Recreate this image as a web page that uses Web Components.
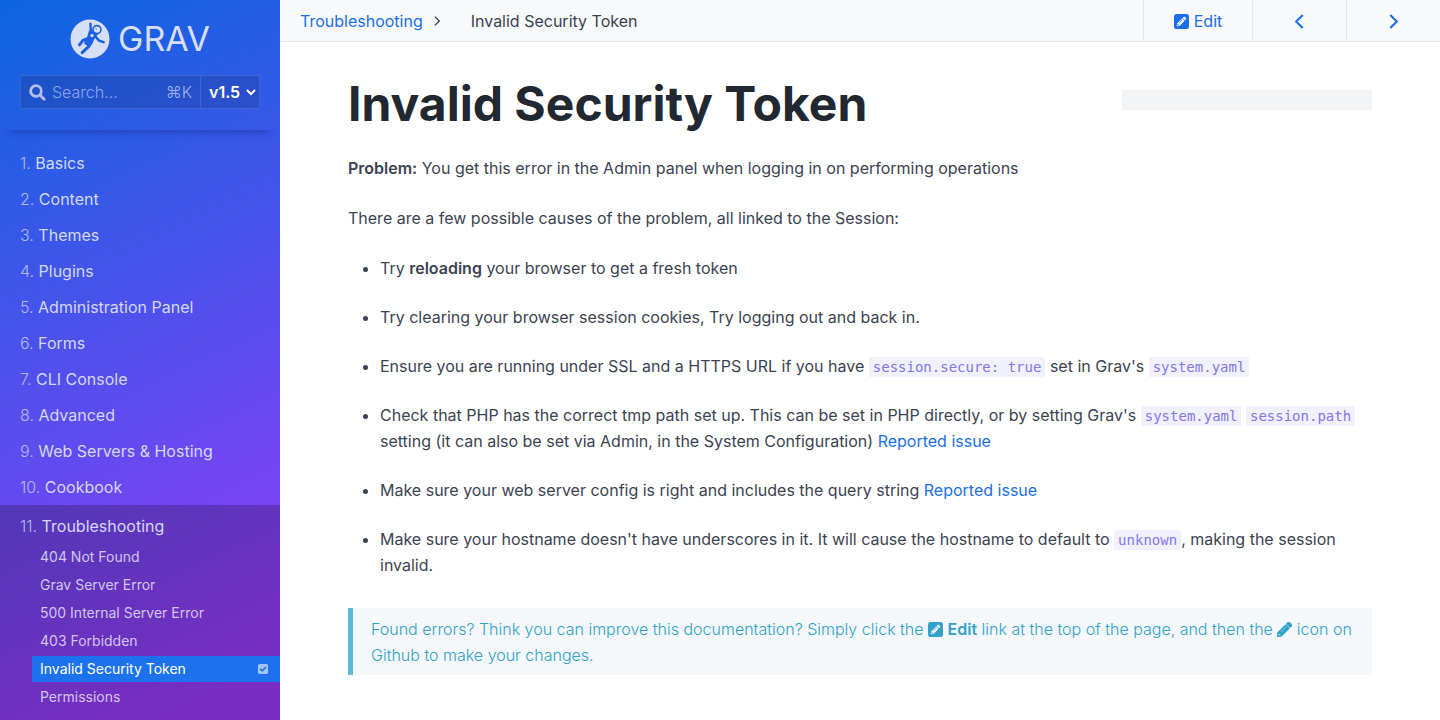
<!DOCTYPE html>
<html lang="en">
<head>
<meta charset="utf-8">
<meta name="viewport" content="width=device-width, initial-scale=1">
<title>Invalid Security Token | Grav Documentation</title>
<style>
:root {
	--link:#1a6fe8;
	--text:#3b4351;
	--heading:#222831;
	--line:#e4e7eb;
}
body {
	margin:0;
	font:400 16px/26px Inter, "Liberation Sans", sans-serif;
	color:var(--text);
	background:#fff;
}
a {
	color:var(--link);
	text-decoration:none;
}
p {
	margin:0 0 24px;
}
strong {
	font-weight:600;
}
ul {
	margin:0;
	padding:0 0 0 32px;
}
li {
	margin-bottom:23px;
}
</style>
</head>
<body>
<docs-layout>
	<docs-sidebar slot="sidebar">
		<nav-section number="1">Basics</nav-section>
		<nav-section number="2">Content</nav-section>
		<nav-section number="3">Themes</nav-section>
		<nav-section number="4">Plugins</nav-section>
		<nav-section number="5">Administration Panel</nav-section>
		<nav-section number="6">Forms</nav-section>
		<nav-section number="7">CLI Console</nav-section>
		<nav-section number="8">Advanced</nav-section>
		<nav-section number="9">Web Servers &amp; Hosting</nav-section>
		<nav-section number="10">Cookbook</nav-section>
		<nav-section number="11" open>Troubleshooting
			<nav-page slot="pages">404 Not Found</nav-page>
			<nav-page slot="pages">Grav Server Error</nav-page>
			<nav-page slot="pages">500 Internal Server Error</nav-page>
			<nav-page slot="pages">403 Forbidden</nav-page>
			<nav-page slot="pages" active>Invalid Security Token</nav-page>
			<nav-page slot="pages">Permissions</nav-page>
		</nav-section>
	</docs-sidebar>
	<docs-topbar slot="topbar">
		<a slot="parent" href="#troubleshooting">Troubleshooting</a>
		<span>Invalid Security Token</span>
	</docs-topbar>
	<docs-article>
		<span slot="title">Invalid Security Token</span>
		<p><strong>Problem:</strong> You get this error in the Admin panel when logging in on performing operations</p>
		<p>There are a few possible causes of the problem, all linked to the Session:</p>
		<ul>
			<li>Try <strong>reloading</strong> your browser to get a fresh token</li>
			<li>Try clearing your browser session cookies, Try logging out and back in.</li>
			<li>Ensure you are running under SSL and a HTTPS URL if you have <code-chip>session.secure: true</code-chip> set in Grav's <code-chip>system.yaml</code-chip></li>
			<li>Check that PHP has the correct tmp path set up. This can be set in PHP directly, or by setting Grav's <code-chip>system.yaml</code-chip> <code-chip>session.path</code-chip> setting (it can also be set via Admin, in the System Configuration) <a href="#issue-admin">Reported issue</a></li>
			<li>Make sure your web server config is right and includes the query string <a href="#issue-query">Reported issue</a></li>
			<li>Make sure your hostname doesn't have underscores in it. It will cause the hostname to default to <code-chip>unknown</code-chip>, making the session invalid.</li>
		</ul>
		<docs-note>Found errors? Think you can improve this documentation? Simply click the <svg-icon name="edit"></svg-icon> <strong>Edit</strong> link at the top of the page, and then the <svg-icon name="pencil"></svg-icon> icon on Github to make your changes.</docs-note>
	</docs-article>
</docs-layout>

<script>
const PENCIL = 'M497.9 142.1l-46.1 46.1c-4.7 4.7-12.3 4.7-17 0l-111-111c-4.7-4.7-4.7-12.3 0-17l46.1-46.1c18.7-18.7 49.1-18.7 67.9 0l60.1 60.1c18.8 18.7 18.8 49.1 0 67.9zM284.2 99.8L21.6 362.4.4 483.9c-2.9 16.4 11.4 30.6 27.8 27.8l121.5-21.3 262.6-262.6c4.7-4.7 4.7-12.3 0-17l-111-111c-4.8-4.7-12.4-4.7-17.1 0zM124.1 339.9c-5.5-5.5-5.5-14.3 0-19.8l154-154c5.5-5.5 14.3-5.5 19.8 0s5.5 14.3 0 19.8l-154 154c-5.5 5.5-14.3 5.5-19.8 0zM88 424h48v36.3l-64.5 11.3-31.1-31.1L51.7 376H88v48z';

const ICONS = {
	edit: `<rect width="512" height="512" rx="96" fill="currentColor"/><path transform="translate(92 92) scale(.64)" fill="var(--icon-cut, #fff)" d="${PENCIL}"/>`,
	pencil: `<path fill="currentColor" stroke="currentColor" stroke-width="24" d="${PENCIL}"/>`,
	search: '<g fill="none" stroke="currentColor" stroke-width="84"><circle cx="210" cy="210" r="160"/><path stroke-linecap="round" d="M330 330l128 128"/></g>',
	check: '<rect width="512" height="512" rx="84" fill="currentColor"/><path fill="none" stroke="var(--icon-cut, #fff)" stroke-width="80" d="M108 250l104 104 196-196"/>',
	left: '<path fill="none" stroke="currentColor" stroke-width="70" d="M366 32L142 256l224 224"/>',
	right: '<path fill="none" stroke="currentColor" stroke-width="70" d="M146 32l224 224-224 224"/>',
};

const define = (name, html, setup) => {
	const template = document.createElement('template');
	template.innerHTML = html;

	customElements.define(name, class extends HTMLElement {
		connectedCallback() {
			if (this.shadowRoot) {
				return;
			}
			this.attachShadow({mode: 'open'}).appendChild(template.content.cloneNode(true));
			if (setup) {
				setup(this, this.shadowRoot);
			}
		}
	});
};

define('svg-icon', `
	<style>
	:host {
		display:inline-block;
		width:15px;
		height:15px;
		vertical-align:-2px;
	}
	svg {
		display:block;
		width:100%;
		height:100%;
	}
	</style>
	<svg viewBox="0 0 512 512" aria-hidden="true"></svg>`, (host, root) => {
	root.querySelector('svg').innerHTML = ICONS[host.getAttribute('name')];
});

define('code-chip', `
	<style>
	:host {
		display:inline;
	}
	code {
		padding:2px 4px;
		border-radius:2px;
		font:14px/20px "DejaVu Sans Mono", monospace;
		color:#8577ea;
		background:#f1f0fd;
	}
	</style>
	<code><slot></slot></code>`);

define('docs-layout', `
	<style>
	:host {
		display:grid;
		grid-template-columns:280px minmax(0, 1fr);
		min-height:100vh;
	}
	</style>
	<slot name="sidebar"></slot>
	<main>
		<slot name="topbar"></slot>
		<slot></slot>
	</main>`);

define('grav-logo', `
	<style>
	:host {
		display:block;
	}
	a {
		display:flex;
		align-items:center;
		justify-content:center;
		gap:8px;
		font-size:34px;
		line-height:40px;
		font-weight:400;
		color:#d6def9;
		text-decoration:none;
	}
	svg {
		width:40px;
		height:40px;
	}
	</style>
	<a href="#home">
		<svg viewBox="0 0 40 40" aria-hidden="true">
			<circle cx="20" cy="20" r="19.5" fill="#d6def9"/>
			<g fill="none" stroke="#1b60e2" stroke-linecap="round" stroke-linejoin="round">
				<circle cx="27" cy="10.6" r="4" stroke-width="1.6"/>
				<path stroke-width="2.4" d="M20.4 4.6l.4 6.4 1.6 3.4M25 17l4 4.6 4.6 1.6"/>
				<path stroke-width="3" d="M16.5 20l-3.6 1.4-3.4 4.4M20.4 22l-1.6 5.4-6.6 6.2"/>
			</g>
			<path fill="#1b60e2" d="M19 11.6l3.4-.4 5.4 4.4-3 3.4-2.2 5.2-2.6 4-5.8-3.4.4-2.6 2.4-3.6z"/>
			<circle cx="22" cy="16.6" r="1.7" fill="#d6def9"/>
			<path fill="none" stroke="#1b60e2" d="M25.6 9.4l1 .8"/>
		</svg>
		<span>GRAV</span>
	</a>`);

define('docs-search', `
	<style>
	:host {
		display:flex;
		box-sizing:border-box;
		height:34px;
		border:1px solid rgba(255,255,255,.12);
		background:rgba(32,60,150,.35);
		color:#b3bff3;
	}
	label {
		display:flex;
		flex:1;
		align-items:center;
		gap:6px;
		min-width:0;
		padding:0 8px;
	}
	svg-icon {
		flex:none;
		width:17px;
		height:17px;
	}
	input {
		flex:1;
		min-width:0;
		padding:0;
		border:0;
		outline:0;
		font:300 16px/26px Inter, sans-serif;
		color:#fff;
		background:none;
	}
	input::placeholder {
		color:#8ea4ee;
		opacity:1;
	}
	kbd {
		font:300 16px/26px Inter, "DejaVu Sans", sans-serif;
		color:#9fb0ef;
	}
	select {
		width:59px;
		padding:0 0 0 4px;
		border:0;
		border-left:1px solid rgba(255,255,255,.12);
		outline:0;
		font:600 16px/26px Inter, sans-serif;
		color:#fff;
		background:none;
	}
	</style>
	<label>
		<svg-icon name="search"></svg-icon>
		<input type="text" placeholder="Search..." aria-label="Search">
		<kbd>⌘K</kbd>
	</label>
	<select aria-label="Version">
		<option>v1.5</option>
	</select>`);

define('docs-sidebar', `
	<style>
	:host {
		display:flex;
		flex-direction:column;
		position:sticky;
		top:0;
		box-sizing:border-box;
		height:100vh;
		overflow:hidden;
		background:linear-gradient(155deg, #0b65e1, #7b43f2 75%);
	}
	header {
		padding:19px 20px 21px;
		box-shadow:0 12px 8px -10px rgba(20,40,120,.45);
	}
	docs-search {
		margin-top:16px;
	}
	nav {
		display:flex;
		flex:1;
		flex-direction:column;
		padding-top:15px;
	}
	</style>
	<header>
		<grav-logo></grav-logo>
		<docs-search></docs-search>
	</header>
	<nav aria-label="Documentation">
		<slot></slot>
	</nav>`);

define('nav-section', `
	<style>
	:host {
		display:block;
	}
	:host([open]) {
		flex:1;
		padding-top:3px;
		background:linear-gradient(155deg, #5138b9, #7a2dc2 85%);
	}
	.title {
		display:block;
		padding:5px 20px;
		color:#d3d7fa;
		text-decoration:none;
	}
	.number {
		font-weight:300;
		color:#b4b6f5;
	}
	.pages {
		display:flex;
		flex-direction:column;
		gap:2px;
		padding-left:32px;
	}
	</style>
	<a class="title" href="#section"><span class="number"></span> <slot></slot></a>
	<div class="pages"><slot name="pages"></slot></div>`, (host, root) => {
	root.querySelector('.number').textContent = `${host.getAttribute('number')}.`;
});

define('nav-page', `
	<style>
	:host {
		display:block;
		--icon-cut:#1b72ec;
	}
	a {
		display:flex;
		align-items:center;
		justify-content:space-between;
		padding:0 12px 0 8px;
		font-size:14px;
		line-height:26px;
		color:#d0c6f1;
		text-decoration:none;
	}
	svg-icon {
		display:none;
		width:10px;
		height:10px;
		color:#a3c5f7;
	}
	:host([active]) a {
		color:#fff;
		background:#1b72ec;
	}
	:host([active]) svg-icon {
		display:block;
	}
	</style>
	<a href="#page"><slot></slot><svg-icon name="check"></svg-icon></a>`);

define('docs-topbar', `
	<style>
	:host {
		display:flex;
		height:41px;
		border-bottom:1px solid var(--line);
		background:#f8f9fb;
		--icon-cut:#f8f9fb;
	}
	.crumbs {
		display:flex;
		flex:1;
		align-items:center;
		padding:1px 0 0 20px;
	}
	.crumbs svg-icon {
		width:10px;
		height:10px;
		margin:0 29px 0 9px;
	}
	.action {
		display:flex;
		align-items:center;
		justify-content:center;
		gap:5px;
		box-sizing:border-box;
		width:94px;
		padding-top:1px;
		border-left:1px solid var(--line);
		color:var(--link);
		text-decoration:none;
	}
	.edit {
		width:109px;
	}
	</style>
	<div class="crumbs">
		<slot name="parent"></slot>
		<svg-icon name="right"></svg-icon>
		<slot></slot>
	</div>
	<a class="action edit" href="#edit"><svg-icon name="edit"></svg-icon>Edit</a>
	<a class="action" href="#previous" aria-label="Previous"><svg-icon name="left"></svg-icon></a>
	<a class="action" href="#next" aria-label="Next"><svg-icon name="right"></svg-icon></a>`);

define('docs-article', `
	<style>
	:host {
		display:block;
		padding:32px 68px 45px;
	}
	header {
		display:flex;
		justify-content:space-between;
		margin-bottom:21px;
	}
	h1 {
		margin:0;
		font-size:48px;
		line-height:60px;
		font-weight:700;
		color:var(--heading);
	}
	.toc {
		width:250px;
		height:20px;
		margin-top:16px;
		background:#f1f3f5;
	}
	</style>
	<header>
		<h1><slot name="title"></slot></h1>
		<div class="toc"></div>
	</header>
	<slot></slot>`);

define('docs-note', `
	<style>
	:host {
		display:block;
		margin-top:30px;
		padding:8px 0 7px 18px;
		border-left:5px solid #5fbbd8;
		font-weight:300;
		color:#31a2c9;
		background:#f4f8fb;
		--icon-cut:#f4f8fb;
	}
	</style>
	<slot></slot>`);
</script>
</body>
</html>
